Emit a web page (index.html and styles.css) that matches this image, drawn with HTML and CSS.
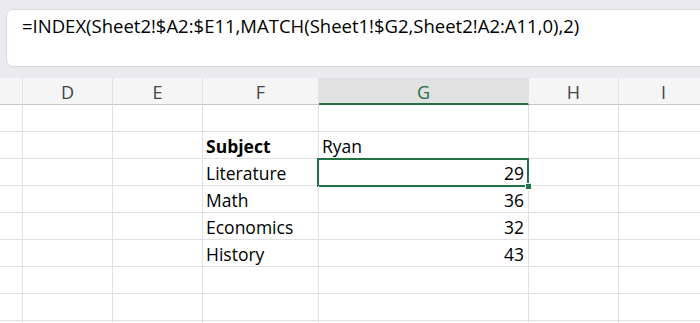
FILE: index.html
```html
<!DOCTYPE html>
<html lang="en">
  <head>
    <meta charset="UTF-8" />
    <meta name="viewport" content="width=device-width, initial-scale=1.0" />
    <title>Sheet1</title>
    <link rel="stylesheet" href="styles.css">
  </head>
  <body>
    <div class="formula-bar">
      <div class="formula-box">=INDEX(Sheet2!$A2:$E11,MATCH(Sheet1!$G2,Sheet2!A2:A11,0),2)</div>
    </div>

    <div class="sheet">
      <!-- column headers -->
      <div class="col-head"></div>
      <div class="col-head">D</div>
      <div class="col-head">E</div>
      <div class="col-head">F</div>
      <div class="col-head active">G</div>
      <div class="col-head">H</div>
      <div class="col-head">I</div>

      <!-- row 1 -->
      <div class="cell"></div><div class="cell"></div><div class="cell"></div>
      <div class="cell"></div><div class="cell"></div><div class="cell"></div><div class="cell"></div>

      <!-- row 2 -->
      <div class="cell"></div><div class="cell"></div><div class="cell"></div>
      <div class="cell bold">Subject</div>
      <div class="cell">Ryan</div>
      <div class="cell"></div><div class="cell"></div>

      <!-- row 3 -->
      <div class="cell"></div><div class="cell"></div><div class="cell"></div>
      <div class="cell">Literature</div>
      <div class="cell num selected">29<span class="handle"></span></div>
      <div class="cell"></div><div class="cell"></div>

      <!-- row 4 -->
      <div class="cell"></div><div class="cell"></div><div class="cell"></div>
      <div class="cell">Math</div>
      <div class="cell num">36</div>
      <div class="cell"></div><div class="cell"></div>

      <!-- row 5 -->
      <div class="cell"></div><div class="cell"></div><div class="cell"></div>
      <div class="cell">Economics</div>
      <div class="cell num">32</div>
      <div class="cell"></div><div class="cell"></div>

      <!-- row 6 -->
      <div class="cell"></div><div class="cell"></div><div class="cell"></div>
      <div class="cell">History</div>
      <div class="cell num">43</div>
      <div class="cell"></div><div class="cell"></div>

      <!-- rows 7-9 -->
      <div class="cell"></div><div class="cell"></div><div class="cell"></div>
      <div class="cell"></div><div class="cell"></div><div class="cell"></div><div class="cell"></div>
      <div class="cell"></div><div class="cell"></div><div class="cell"></div>
      <div class="cell"></div><div class="cell"></div><div class="cell"></div><div class="cell"></div>
      <div class="cell"></div><div class="cell"></div><div class="cell"></div>
      <div class="cell"></div><div class="cell"></div><div class="cell"></div><div class="cell"></div>
    </div>
  </body>
</html>
```

FILE: styles.css
```css
* {
  box-sizing: border-box;
}
body {
  margin: 0;
  width: 700px;
  height: 323px;
  overflow: hidden;
  background-color: #ffffff;
  font-family: "Open Sans", "Noto Sans", sans-serif;
  color: #000;
}
.formula-bar {
  height: 78px;
  padding: 9px 0 11px 6px;
  background-color: #ebebef;
}
.formula-box {
  height: 58px;
  margin-right: -20px;
  padding: 4px 15px;
  background-color: #fff;
  border: 1px solid #d8d8dc;
  border-radius: 7px;
  font-size: 18.5px;
  line-height: 24px;
  white-space: nowrap;
}
.sheet {
  display: grid;
  grid-template-columns: 23px 90px 90px 116px 210px 90px 90px;
  grid-auto-rows: 27px;
  height: 245px;
  overflow: hidden;
}
.col-head {
  display: flex;
  align-items: center;
  justify-content: center;
  padding-top: 2px;
  background-color: #f5f5f5;
  border-right: 1px solid #e3e3e3;
  border-bottom: 1px solid #c6c6c6;
  font-size: 18px;
  color: #444;
}
.col-head.active {
  background-color: #e1e1e1;
  color: #217346;
  border-bottom: 2px solid #217346;
}
.cell {
  position: relative;
  padding: 1px 4px 0 3px;
  border-right: 1px solid #e1e1e1;
  border-bottom: 1px solid #e1e1e1;
  font-size: 17.5px;
  line-height: 26px;
  white-space: nowrap;
}
.bold {
  font-weight: 700;
}
.num {
  text-align: right;
}
.selected::after {
  content: "";
  position: absolute;
  top: -1px;
  left: -2px;
  right: -1px;
  bottom: -2px;
  border: 2px solid #217346;
}
.handle {
  position: absolute;
  right: -4px;
  bottom: -5px;
  width: 7px;
  height: 7px;
  background-color: #217346;
  border: 1px solid #fff;
  z-index: 1;
}
```
